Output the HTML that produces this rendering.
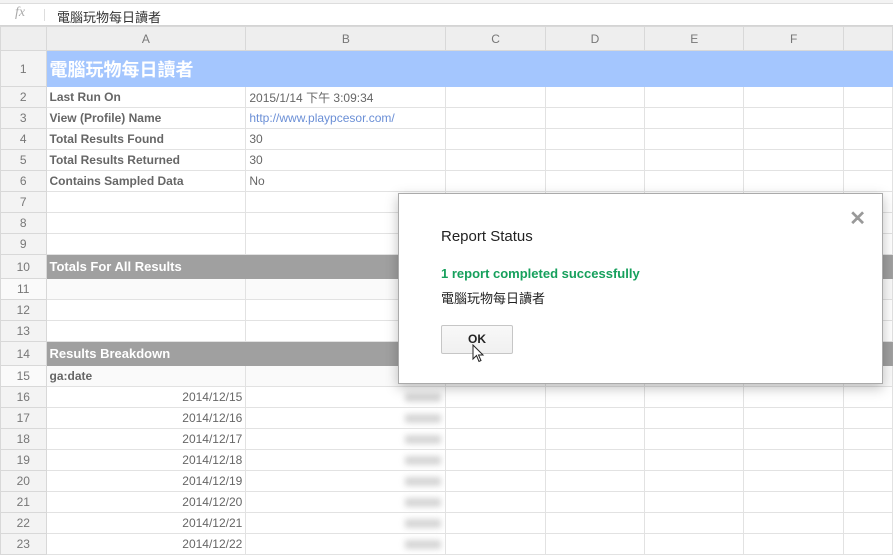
<!DOCTYPE html>
<html><head><meta charset="utf-8"><style>
*{margin:0;padding:0;box-sizing:border-box}
body{width:893px;height:553px;overflow:hidden;background:#fff;font-family:"Liberation Sans","Noto Sans CJK TC",sans-serif;position:relative}
.top{position:absolute;left:0;top:0;width:893px;height:4px;background:#f3f3f3;border-bottom:1px solid #ddd}
.fx{position:absolute;left:0;top:4px;width:893px;height:22px;border-bottom:1px solid #d4d4d4;background:#fff}
.fx i{position:absolute;left:15px;top:1px;font-family:"Liberation Serif",serif;color:#aaa;font-size:14px}
.fx .sep{position:absolute;left:44px;top:5px;width:1px;height:12px;background:#ddd}
.fx span{position:absolute;left:57px;top:3px;font-size:13px;color:#333}
table{position:absolute;left:0;top:26px;border-collapse:collapse;table-layout:fixed;font-size:12px;color:#666}
td{border:1px solid #e2e2e2;height:21px;padding:0 3px;white-space:nowrap;overflow:hidden;position:relative}
tr.h td{background:#eeeeee;height:24px;text-align:center;color:#777;font-size:12px;border-color:#d8d8d8}
td.n{background:#f3f3f3;text-align:center;color:#777;border-color:#d8d8d8}
tr.r1 td{height:36px;background:#a4c6fe;border-color:#a4c6fe;color:#fff;font-size:18px;font-weight:bold}
tr.g td{background:#a0a0a0;border-color:#a0a0a0;color:#fff;font-weight:bold;font-size:13px;height:24px}
tr.l td{background:#fafafa}
b{color:#666}
a{color:#6b8fd6}
.r{text-align:right}
.blur{position:absolute;right:4px;top:6px;width:36px;height:9px;background:#bbb;filter:blur(3px);opacity:.6}
.dlg{position:absolute;left:398px;top:193px;width:485px;height:191px;background:#fff;border:1px solid #aaa;box-shadow:0 4px 12px rgba(0,0,0,.25)}
.dlg .x{position:absolute;right:16px;top:12px;font-size:20px;color:#999;font-weight:bold}
.dlg .t{position:absolute;left:42px;top:34px;font-size:15px;color:#222}
.dlg .s{position:absolute;left:42px;top:72px;font-size:13px;color:#16a05c;font-weight:bold}
.dlg .c{position:absolute;left:42px;top:94px;font-size:13px;color:#222}
.dlg .ok{position:absolute;left:42px;top:131px;width:72px;height:29px;border:1px solid #c6c6c6;border-radius:2px;background:linear-gradient(#f8f8f8,#f0f0f0);text-align:center;line-height:27px;font-size:12px;font-weight:bold;color:#222}
</style></head><body>
<div class="top"></div>
<div class="fx"><i>fx</i><div class="sep"></div><span>電腦玩物每日讀者</span></div>
<table>
<colgroup><col style="width:46px"><col style="width:201px"><col style="width:201px"><col style="width:101px"><col style="width:101px"><col style="width:101px"><col style="width:101px"><col style="width:50px"></colgroup>
<tr class="h"><td></td><td>A</td><td>B</td><td>C</td><td>D</td><td>E</td><td>F</td><td></td></tr>
<tr class="r1"><td class="n" style="background:#f3f3f3;border-color:#d8d8d8;color:#777;font-size:12px;font-weight:normal">1</td><td colspan="7">電腦玩物每日讀者</td></tr>
<tr><td class="n">2</td><td><b>Last Run On</b></td><td>2015/1/14 下午 3:09:34</td><td></td><td></td><td></td><td></td><td></td></tr>
<tr><td class="n">3</td><td><b>View (Profile) Name</b></td><td><a>http://www.playpcesor.com/</a></td><td></td><td></td><td></td><td></td><td></td></tr>
<tr><td class="n">4</td><td><b>Total Results Found</b></td><td>30</td><td></td><td></td><td></td><td></td><td></td></tr>
<tr><td class="n">5</td><td><b>Total Results Returned</b></td><td>30</td><td></td><td></td><td></td><td></td><td></td></tr>
<tr><td class="n">6</td><td><b>Contains Sampled Data</b></td><td>No</td><td></td><td></td><td></td><td></td><td></td></tr>
<tr><td class="n">7</td><td></td><td></td><td></td><td></td><td></td><td></td><td></td></tr>
<tr><td class="n">8</td><td></td><td></td><td></td><td></td><td></td><td></td><td></td></tr>
<tr><td class="n">9</td><td></td><td></td><td></td><td></td><td></td><td></td><td></td></tr>
<tr class="g"><td class="n" style="background:#f3f3f3;color:#777;font-weight:normal;font-size:12px;border-color:#d8d8d8">10</td><td colspan="7">Totals For All Results</td></tr>
<tr class="l"><td class="n">11</td><td></td><td class="r"><b>ga:</b></td><td></td><td></td><td></td><td></td><td></td></tr>
<tr><td class="n">12</td><td></td><td></td><td></td><td></td><td></td><td></td><td></td></tr>
<tr><td class="n">13</td><td></td><td></td><td></td><td></td><td></td><td></td><td></td></tr>
<tr class="g"><td class="n" style="background:#f3f3f3;color:#777;font-weight:normal;font-size:12px;border-color:#d8d8d8">14</td><td colspan="7">Results Breakdown</td></tr>
<tr class="l"><td class="n">15</td><td><b>ga:date</b></td><td class="r"><b>ga:</b></td><td></td><td></td><td></td><td></td><td></td></tr>
<tr><td class="n">16</td><td class="r">2014/12/15</td><td><div class="blur"></div></td><td></td><td></td><td></td><td></td><td></td></tr>
<tr><td class="n">17</td><td class="r">2014/12/16</td><td><div class="blur"></div></td><td></td><td></td><td></td><td></td><td></td></tr>
<tr><td class="n">18</td><td class="r">2014/12/17</td><td><div class="blur"></div></td><td></td><td></td><td></td><td></td><td></td></tr>
<tr><td class="n">19</td><td class="r">2014/12/18</td><td><div class="blur"></div></td><td></td><td></td><td></td><td></td><td></td></tr>
<tr><td class="n">20</td><td class="r">2014/12/19</td><td><div class="blur"></div></td><td></td><td></td><td></td><td></td><td></td></tr>
<tr><td class="n">21</td><td class="r">2014/12/20</td><td><div class="blur"></div></td><td></td><td></td><td></td><td></td><td></td></tr>
<tr><td class="n">22</td><td class="r">2014/12/21</td><td><div class="blur"></div></td><td></td><td></td><td></td><td></td><td></td></tr>
<tr><td class="n">23</td><td class="r">2014/12/22</td><td><div class="blur"></div></td><td></td><td></td><td></td><td></td><td></td></tr>
</table>
<div class="dlg">
<div class="x">✕</div>
<div class="t">Report Status</div>
<div class="s">1 report completed successfully</div>
<div class="c">電腦玩物每日讀者</div>
<div class="ok">OK</div>
<svg style="position:absolute;left:73px;top:150px" width="14" height="20" viewBox="0 0 14 20"><path d="M1 1 L1 15 L4.5 11.5 L7 17.5 L9 16.5 L6.5 11 L11 11 Z" fill="#fff" stroke="#222" stroke-width="1"/></svg>
</div>
</body></html>
